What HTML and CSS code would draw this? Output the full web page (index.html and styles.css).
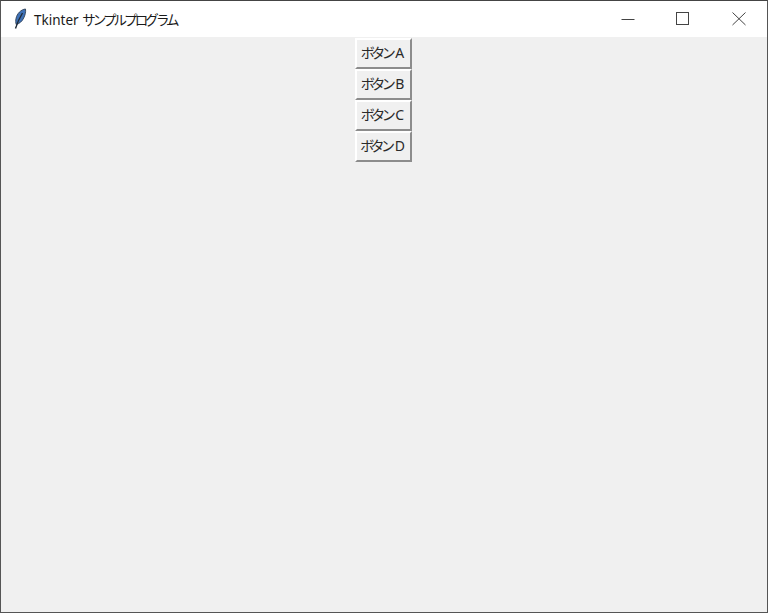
FILE: index.html
```html
<!DOCTYPE html>
<html lang="ja">

<head>
    <meta charset="UTF-8">
    <title>Tkinter サンプルプログラム</title>
    <link rel="stylesheet" href="styles.css">
</head>

<body>
<main class="window">
    <header class="titleBar">
        <svg class="appIcon" width="14" height="22" viewBox="0 0 14 22" aria-hidden="true">
            <path d="M12.500 1C8 1.500 4 5.500 3 10.500c-.4 2-.4 4 .2 6 3-.8 6-3 7.500-6.500C12 7.500 13 4 12.500 1z" fill="#3f72b8" stroke="#2f3f55" stroke-width=".9"/>
            <path d="M9.500 5C7 9 4.500 14 2.500 20.500" fill="none" stroke="#1f2a36" stroke-width="1.400"/>
        </svg>
        <span class="titleText">Tkinter <span class="kana">サンプルプログラム</span></span>
        <div class="windowControls">
            <span class="windowControl">
                <svg width="14" height="14" viewBox="0 0 14 14"><path d="M.5 7.500h13" stroke="#444" fill="none"/></svg>
            </span>
            <span class="windowControl">
                <svg class="maximizeIcon" width="14" height="14" viewBox="0 0 14 14"><rect x=".5" y=".5" width="12" height="12" stroke="#444" fill="none"/></svg>
            </span>
            <span class="windowControl">
                <svg width="14" height="14" viewBox="0 0 14 14"><path d="M.5.5l13 12.500M13.500.5l-13 12.500" stroke="#444" fill="none"/></svg>
            </span>
        </div>
    </header>
    <div class="content">
        <button class="tkButton"><span class="kana">ボタン</span>A</button>
        <button class="tkButton"><span class="kana">ボタン</span>B</button>
        <button class="tkButton"><span class="kana">ボタン</span>C</button>
        <button class="tkButton"><span class="kana">ボタン</span>D</button>
    </div>
</main>
</body>

</html>
```

FILE: styles.css
```css
* {
    box-sizing: border-box;
    margin: 0;
    padding: 0;
}

body {
    background-color: #f0f0f0;
    font-family: "Noto Sans", "Noto Sans CJK JP", sans-serif;
    color: #1a1a1a;
}

.window {
    width: 768px;
    height: 613px;
    border: 1px solid #555555;
    border-top-color: #444444;
    display: flex;
    flex-direction: column;
    overflow: hidden;
}

.titleBar {
    height: 36px;
    flex: none;
    background-color: #ffffff;
    display: flex;
    align-items: center;
    padding-left: 12px;
}

.appIcon {
    flex: none;
    margin-right: 7px;
}

.titleText {
    font-size: 13.5px;
    flex: 1;
}

.kana {
    letter-spacing: -2.900px;
}

.windowControls {
    display: flex;
    height: 100%;
}

.windowControl {
    width: 55.500px;
    display: flex;
    align-items: center;
    justify-content: center;
}

.maximizeIcon {
    margin-right: 2px;
}

.content {
    flex: 1;
    padding-top: 1px;
    padding-right: 1px;
    background-color: #f0f0f0;
    display: flex;
    flex-direction: column;
    align-items: center;
}

.tkButton {
    width: 57px;
    height: 31px;
    padding-bottom: 3px;
    padding-right: 2px;
    font-family: inherit;
    font-size: 14px;
    color: #2a2a2a;
    background-color: #f0f0f0;
    border: 2px solid;
    border-color: #ffffff #8c8c8c #8c8c8c #ffffff;
}

.tkButton .kana {
    letter-spacing: -3.500px;
    margin-right: 3px;
}
```
